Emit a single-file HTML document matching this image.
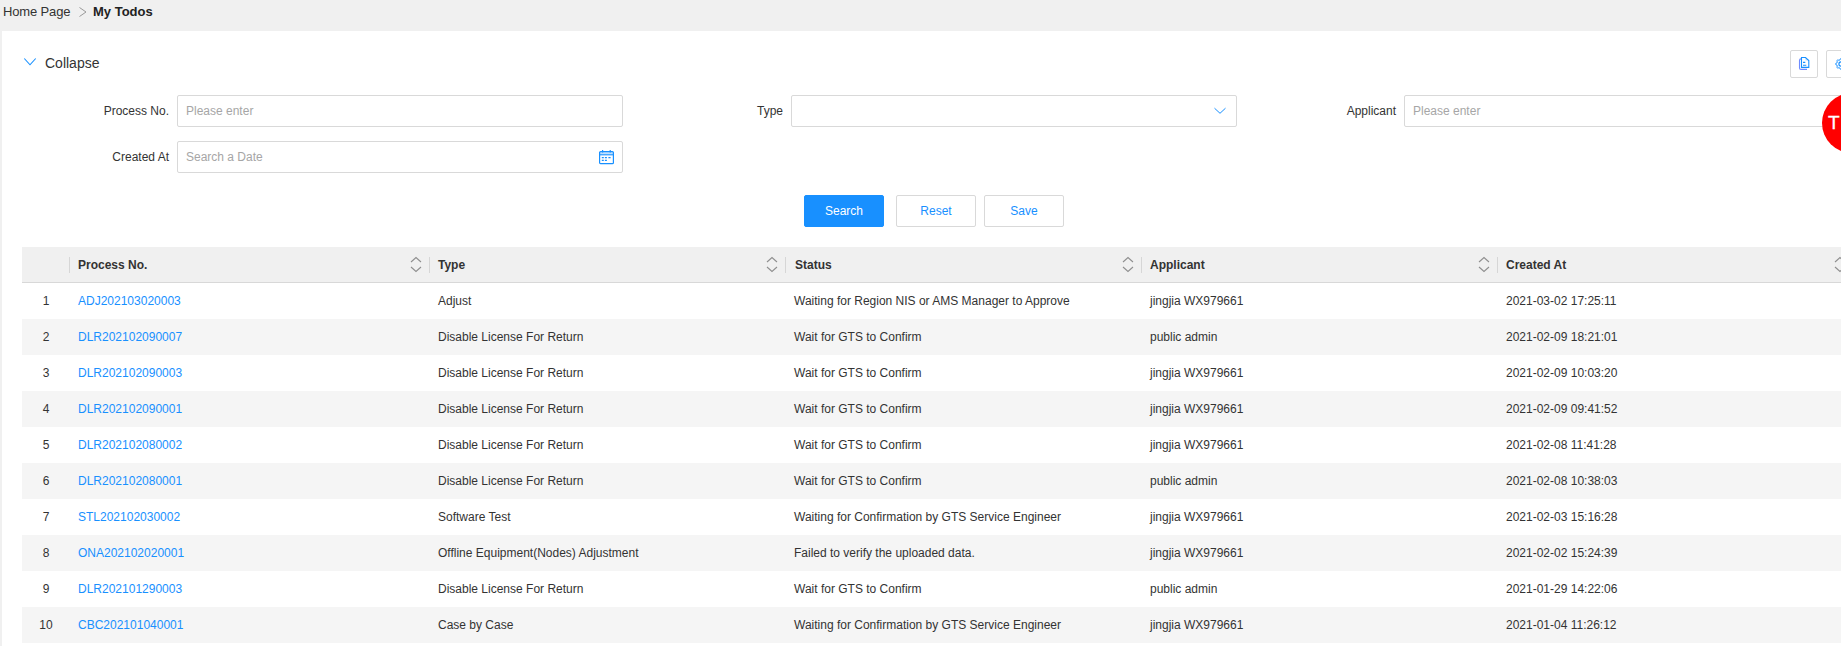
<!DOCTYPE html>
<html><head><meta charset="utf-8">
<style>
*{box-sizing:border-box;margin:0;padding:0}
html,body{width:1841px;height:646px;overflow:hidden;background:#f0f0f0;font-family:"Liberation Sans",sans-serif;color:#333;position:relative}
.abs{position:absolute}
.bc{position:absolute;top:0;left:3px;height:30px;line-height:24px;font-size:13px;color:#333;white-space:nowrap}
.panel{position:absolute;left:2px;top:31px;width:1900px;height:700px;background:#fff}
.lbl{position:absolute;font-size:12px;color:#333;text-align:right;white-space:nowrap;line-height:14px}
.inp{position:absolute;height:32px;border:1px solid #d9d9d9;border-radius:2px;background:#fff;font-size:12px;color:#a6a6a6;line-height:30px;padding-left:8px;white-space:nowrap}
.btn{position:absolute;top:195px;width:80px;height:32px;border:1px solid #d9d9d9;border-radius:2px;background:#fff;color:#1890ff;font-size:12px;line-height:30px;text-align:center}
.btn.pri{background:#1890ff;border-color:#1890ff;color:#fff}
.thead{position:absolute;left:22px;top:247px;width:1900px;height:36px;background:#f0f0f0;border-bottom:1px solid #d8d8d8}
.th{position:absolute;top:0;height:35px;line-height:37px;font-size:12px;font-weight:bold;color:#333;white-space:nowrap}
.div{position:absolute;top:257px;width:1px;height:16px;background:#d6d6d6}
.row{position:absolute;left:22px;width:1900px;height:36px}
.row.s{background:#f5f5f5}
.td{position:absolute;top:0;height:36px;line-height:36px;font-size:12px;color:#333;white-space:nowrap}
.td.l{color:#1890ff}
.sort{position:absolute;top:256px}
</style></head><body>
<div class="bc" style="letter-spacing:-0.15px">Home Page</div>
<svg class="abs" style="left:78px;top:6px" width="10" height="12" viewBox="0 0 10 12"><path d="M1.5 1.5 L8 6 L1.5 10.5" fill="none" stroke="#999" stroke-width="1"/></svg>
<div class="bc" style="left:93px"><b style="color:#222">My Todos</b></div>
<div class="panel"></div>

<!-- collapse -->
<svg class="abs" style="left:23px;top:57px" width="14" height="10" viewBox="0 0 14 10"><path d="M1.3 1.5 L7 7.8 L12.7 1.5" fill="none" stroke="#1890ff" stroke-width="1.1"/></svg>
<div class="abs" style="left:45px;top:55px;font-size:14px;line-height:16px;color:#333">Collapse</div>

<!-- top right buttons -->
<div class="abs" style="left:1790px;top:50px;width:28px;height:28px;border:1px solid #d9d9d9;border-radius:2px;background:#fff"></div>
<div class="abs" style="left:1826px;top:50px;width:28px;height:28px;border:1px solid #d9d9d9;border-radius:2px;background:#fff"></div>

<!-- form -->
<div class="lbl" style="right:1672px;top:104px">Process No.</div>
<div class="inp" style="left:177px;top:95px;width:446px">Please enter</div>
<div class="lbl" style="right:1058px;top:104px">Type</div>
<div class="inp" style="left:791px;top:95px;width:446px"></div>
<div class="lbl" style="right:445px;top:104px">Applicant</div>
<div class="inp" style="left:1404px;top:95px;width:600px">Please enter</div>
<div class="lbl" style="right:1672px;top:150px">Created At</div>
<div class="inp" style="left:177px;top:141px;width:446px">Search a Date</div>

<div class="btn pri" style="left:804px">Search</div>
<div class="btn" style="left:896px">Reset</div>
<div class="btn" style="left:984px">Save</div>

<!-- table -->
<div class="thead"></div>
<div class="th" style="left:78px;top:247px">Process No.</div>
<div class="th" style="left:438px;top:247px">Type</div>
<div class="th" style="left:795px;top:247px">Status</div>
<div class="th" style="left:1150px;top:247px">Applicant</div>
<div class="th" style="left:1506px;top:247px">Created At</div>
<div class="div" style="left:69px"></div>
<div class="div" style="left:429px"></div>
<div class="div" style="left:785px"></div>
<div class="div" style="left:1141px"></div>
<div class="div" style="left:1497px"></div>
<div class="sort" style="left:410px"><svg width="12" height="18" viewBox="0 0 12 18"><path d="M1 6 L6 1.5 L11 6 M1 11 L6 15.5 L11 11" fill="none" stroke="#8f8f8f" stroke-width="1.1"/></svg></div>
<div class="sort" style="left:766px"><svg width="12" height="18" viewBox="0 0 12 18"><path d="M1 6 L6 1.5 L11 6 M1 11 L6 15.5 L11 11" fill="none" stroke="#8f8f8f" stroke-width="1.1"/></svg></div>
<div class="sort" style="left:1122px"><svg width="12" height="18" viewBox="0 0 12 18"><path d="M1 6 L6 1.5 L11 6 M1 11 L6 15.5 L11 11" fill="none" stroke="#8f8f8f" stroke-width="1.1"/></svg></div>
<div class="sort" style="left:1478px"><svg width="12" height="18" viewBox="0 0 12 18"><path d="M1 6 L6 1.5 L11 6 M1 11 L6 15.5 L11 11" fill="none" stroke="#8f8f8f" stroke-width="1.1"/></svg></div>
<div class="sort" style="left:1834px"><svg width="12" height="18" viewBox="0 0 12 18"><path d="M1 6 L6 1.5 L11 6 M1 11 L6 15.5 L11 11" fill="none" stroke="#8f8f8f" stroke-width="1.1"/></svg></div>
<div class="row" style="top:283px"></div>
<div class="td" style="left:22px;width:48px;text-align:center;top:283px">1</div>
<div class="td l" style="left:78px;top:283px">ADJ202103020003</div>
<div class="td" style="left:438px;top:283px">Adjust</div>
<div class="td" style="left:794px;top:283px">Waiting for Region NIS or AMS Manager to Approve</div>
<div class="td" style="left:1150px;top:283px">jingjia WX979661</div>
<div class="td" style="left:1506px;top:283px">2021-03-02 17:25:11</div>
<div class="row s" style="top:319px"></div>
<div class="td" style="left:22px;width:48px;text-align:center;top:319px">2</div>
<div class="td l" style="left:78px;top:319px">DLR202102090007</div>
<div class="td" style="left:438px;top:319px">Disable License For Return</div>
<div class="td" style="left:794px;top:319px">Wait for GTS to Confirm</div>
<div class="td" style="left:1150px;top:319px">public admin</div>
<div class="td" style="left:1506px;top:319px">2021-02-09 18:21:01</div>
<div class="row" style="top:355px"></div>
<div class="td" style="left:22px;width:48px;text-align:center;top:355px">3</div>
<div class="td l" style="left:78px;top:355px">DLR202102090003</div>
<div class="td" style="left:438px;top:355px">Disable License For Return</div>
<div class="td" style="left:794px;top:355px">Wait for GTS to Confirm</div>
<div class="td" style="left:1150px;top:355px">jingjia WX979661</div>
<div class="td" style="left:1506px;top:355px">2021-02-09 10:03:20</div>
<div class="row s" style="top:391px"></div>
<div class="td" style="left:22px;width:48px;text-align:center;top:391px">4</div>
<div class="td l" style="left:78px;top:391px">DLR202102090001</div>
<div class="td" style="left:438px;top:391px">Disable License For Return</div>
<div class="td" style="left:794px;top:391px">Wait for GTS to Confirm</div>
<div class="td" style="left:1150px;top:391px">jingjia WX979661</div>
<div class="td" style="left:1506px;top:391px">2021-02-09 09:41:52</div>
<div class="row" style="top:427px"></div>
<div class="td" style="left:22px;width:48px;text-align:center;top:427px">5</div>
<div class="td l" style="left:78px;top:427px">DLR202102080002</div>
<div class="td" style="left:438px;top:427px">Disable License For Return</div>
<div class="td" style="left:794px;top:427px">Wait for GTS to Confirm</div>
<div class="td" style="left:1150px;top:427px">jingjia WX979661</div>
<div class="td" style="left:1506px;top:427px">2021-02-08 11:41:28</div>
<div class="row s" style="top:463px"></div>
<div class="td" style="left:22px;width:48px;text-align:center;top:463px">6</div>
<div class="td l" style="left:78px;top:463px">DLR202102080001</div>
<div class="td" style="left:438px;top:463px">Disable License For Return</div>
<div class="td" style="left:794px;top:463px">Wait for GTS to Confirm</div>
<div class="td" style="left:1150px;top:463px">public admin</div>
<div class="td" style="left:1506px;top:463px">2021-02-08 10:38:03</div>
<div class="row" style="top:499px"></div>
<div class="td" style="left:22px;width:48px;text-align:center;top:499px">7</div>
<div class="td l" style="left:78px;top:499px">STL202102030002</div>
<div class="td" style="left:438px;top:499px">Software Test</div>
<div class="td" style="left:794px;top:499px">Waiting for Confirmation by GTS Service Engineer</div>
<div class="td" style="left:1150px;top:499px">jingjia WX979661</div>
<div class="td" style="left:1506px;top:499px">2021-02-03 15:16:28</div>
<div class="row s" style="top:535px"></div>
<div class="td" style="left:22px;width:48px;text-align:center;top:535px">8</div>
<div class="td l" style="left:78px;top:535px">ONA202102020001</div>
<div class="td" style="left:438px;top:535px">Offline Equipment(Nodes) Adjustment</div>
<div class="td" style="left:794px;top:535px">Failed to verify the uploaded data.</div>
<div class="td" style="left:1150px;top:535px">jingjia WX979661</div>
<div class="td" style="left:1506px;top:535px">2021-02-02 15:24:39</div>
<div class="row" style="top:571px"></div>
<div class="td" style="left:22px;width:48px;text-align:center;top:571px">9</div>
<div class="td l" style="left:78px;top:571px">DLR202101290003</div>
<div class="td" style="left:438px;top:571px">Disable License For Return</div>
<div class="td" style="left:794px;top:571px">Wait for GTS to Confirm</div>
<div class="td" style="left:1150px;top:571px">public admin</div>
<div class="td" style="left:1506px;top:571px">2021-01-29 14:22:06</div>
<div class="row s" style="top:607px"></div>
<div class="td" style="left:22px;width:48px;text-align:center;top:607px">10</div>
<div class="td l" style="left:78px;top:607px">CBC202101040001</div>
<div class="td" style="left:438px;top:607px">Case by Case</div>
<div class="td" style="left:794px;top:607px">Waiting for Confirmation by GTS Service Engineer</div>
<div class="td" style="left:1150px;top:607px">jingjia WX979661</div>
<div class="td" style="left:1506px;top:607px">2021-01-04 11:26:12</div>

<!-- select chevron -->
<svg class="abs" style="left:1213px;top:106px" width="14" height="10" viewBox="0 0 14 10"><path d="M1.5 2.2 L7 7.3 L12.5 2.2" fill="none" stroke="#1890ff" stroke-width="1"/></svg>
<!-- calendar icon -->
<svg class="abs" style="left:599px;top:150px" width="15" height="15" viewBox="0 0 15 15"><rect x="1" y="2" width="13" height="2.6" fill="#1890ff" opacity="0.28"/><rect x="0.6" y="1.6" width="13.8" height="12.1" rx="1" fill="none" stroke="#1890ff" stroke-width="1.2"/><line x1="0.6" y1="4.8" x2="14.4" y2="4.8" stroke="#1890ff" stroke-width="1.1"/><line x1="3.6" y1="0" x2="3.6" y2="2.5" stroke="#1890ff" stroke-width="1.2"/><line x1="11.2" y1="0" x2="11.2" y2="2.5" stroke="#1890ff" stroke-width="1.2"/><path d="M2.8 7.6h2M5.9 7.6h2M9.4 7.6h2.2M2.8 10.4h2M5.9 10.4h2" stroke="#1890ff" stroke-width="1.1"/></svg>
<!-- doc icon -->
<svg class="abs" style="left:1798px;top:56px" width="12" height="15" viewBox="0 0 12 15"><path d="M3 2.9 Q1.5 2.9 1.5 4.4 V12 Q1.5 13.4 3 13.4 H9" fill="none" stroke="#6f8cff" stroke-width="1.1"/><path d="M3.5 1.5 H7.5 L10.8 4.6 V11.4 H3.5 Z" fill="none" stroke="#1890ff" stroke-width="1.1"/><path d="M7.5 1.5 V4.6 H10.8" fill="#1890ff" opacity=".25"/><path d="M5 6.4 H7.3 M5 9.2 H8.3" stroke="#1890ff" stroke-width="1.1"/></svg>
<!-- gear icon -->
<svg class="abs" style="left:1834.5px;top:57.5px" width="12" height="12" viewBox="0 0 12 12"><path d="M11.30 6.00 L11.28 6.46 L10.89 6.86 L9.96 7.06 L9.85 7.40 L9.72 7.73 L9.55 8.05 L10.06 8.85 L10.06 9.41 L9.75 9.75 L9.41 10.06 L8.85 10.06 L8.05 9.55 L7.73 9.72 L7.40 9.85 L7.06 9.96 L6.86 10.89 L6.46 11.28 L6.00 11.30 L5.54 11.28 L5.14 10.89 L4.94 9.96 L4.60 9.85 L4.27 9.72 L3.95 9.55 L3.15 10.06 L2.59 10.06 L2.25 9.75 L1.94 9.41 L1.94 8.85 L2.45 8.05 L2.28 7.73 L2.15 7.40 L2.04 7.06 L1.11 6.86 L0.72 6.46 L0.70 6.00 L0.72 5.54 L1.11 5.14 L2.04 4.94 L2.15 4.60 L2.28 4.27 L2.45 3.95 L1.94 3.15 L1.94 2.59 L2.25 2.25 L2.59 1.94 L3.15 1.94 L3.95 2.45 L4.27 2.28 L4.60 2.15 L4.94 2.04 L5.14 1.11 L5.54 0.72 L6.00 0.70 L6.46 0.72 L6.86 1.11 L7.06 2.04 L7.40 2.15 L7.73 2.28 L8.05 2.45 L8.85 1.94 L9.41 1.94 L9.75 2.25 L10.06 2.59 L10.06 3.15 L9.55 3.95 L9.72 4.27 L9.85 4.60 L9.96 4.94 L10.89 5.14 L11.28 5.54Z" fill="none" stroke="#1890ff" stroke-width="1" stroke-linejoin="round"/><circle cx="6" cy="6" r="2.1" fill="none" stroke="#1890ff" stroke-width="1.15"/></svg>
<!-- avatar -->
<div class="abs" style="left:1822px;top:93px;width:60px;height:60px;border-radius:50%;background:#f00;color:#fff;font-size:19px;line-height:60px;text-indent:6px;-webkit-text-stroke:0.3px #fff">T</div>
</body></html>
